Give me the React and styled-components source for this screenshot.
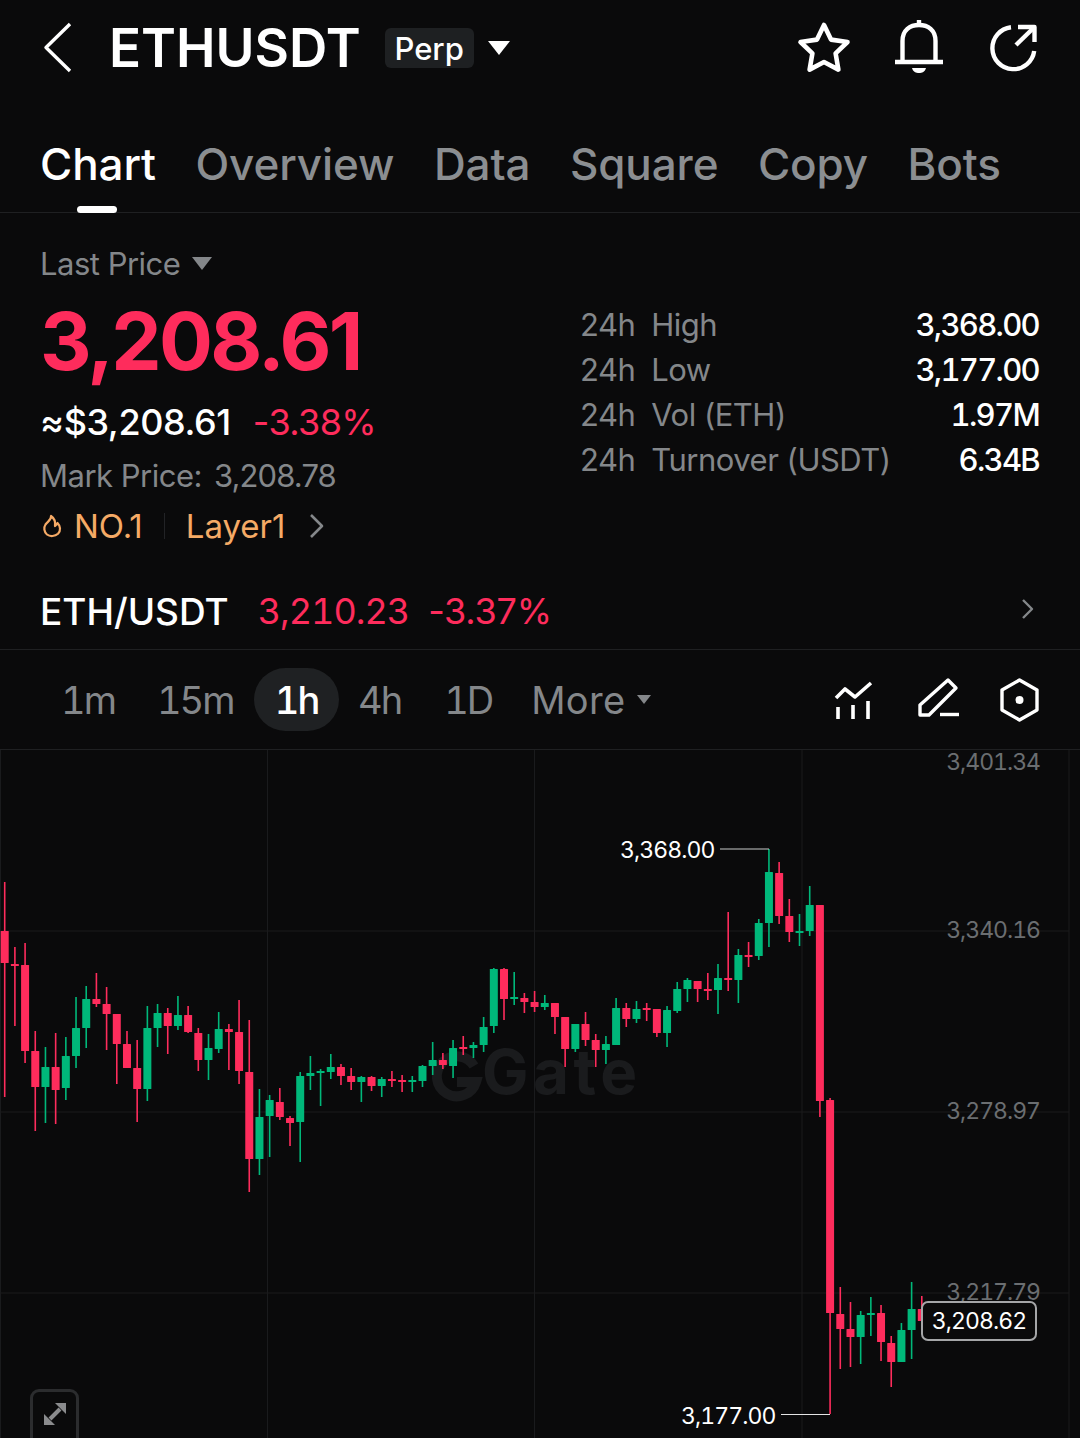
import React from 'react';
import styled, { createGlobalStyle } from 'styled-components';

const RED = '#fe2c5c';
const GREEN = '#00b87a';

const GlobalStyle = createGlobalStyle`
    html, body {
        margin: 0;
        padding: 0;
        background: #0a0a0b;
    }
    * {
        box-sizing: border-box;
    }
`;

const Page = styled.div`
    width: 1080px;
    height: 1438px;
    overflow: hidden;
    background: #0a0a0b;
    color: #fff;
    font-family: Inter, 'Noto Sans', sans-serif;
`;

const Header = styled.div`
    display: flex;
    align-items: center;
    height: 96px;
    padding: 0 42px 0 44px;
`;

const Icon = styled.svg`
    display: block;
    flex: none;
    overflow: visible;
    fill: none;
    stroke: ${(p) => p.$color || '#fff'};
    stroke-width: ${(p) => p.$stroke || 4}px;
    stroke-linejoin: round;
`;

const Title = styled.div`
    margin-left: 37px;
    font-size: 53px;
    font-weight: 600;
`;

const Badge = styled.div`
    margin-left: 24px;
    width: 89px;
    height: 40px;
    display: flex;
    align-items: center;
    justify-content: center;
    background: #1e2022;
    border-radius: 6px;
    font-size: 31px;
    font-weight: 500;
`;

const Caret = styled.div`
    flex: none;
    width: 0;
    height: 0;
    margin-left: ${(p) => p.$left || 0}px;
    border-left: ${(p) => p.$size}px solid transparent;
    border-right: ${(p) => p.$size}px solid transparent;
    border-top: ${(p) => p.$size * 1.25}px solid ${(p) => p.$color};
`;

const HeaderActions = styled.div`
    margin-left: auto;
    display: flex;
    align-items: center;
    gap: 47px;
`;

const Tabs = styled.div`
    display: flex;
    align-items: center;
    gap: 39.5px;
    height: 117px;
    padding: 20px 40px 0 40px;
    border-bottom: 1px solid #1f2022;
`;

const Tab = styled.div`
    position: relative;
    font-size: 44px;
    font-weight: 500;
    color: ${(p) => (p.$active ? '#fff' : '#8b8e91')};
    letter-spacing: -0.1px;

    ${(p) =>
        p.$active &&
        `&::after {
            content: '';
            position: absolute;
            left: 37px;
            bottom: -22px;
            width: 40px;
            height: 7px;
            border-radius: 4px;
            background: #fff;
        }`}
`;

const Summary = styled.div`
    display: flex;
    justify-content: space-between;
    height: 360px;
    padding: 32px 40px 0 40px;
`;

const LeftColumn = styled.div`
    display: flex;
    flex-direction: column;
`;

const PriceLabel = styled.div`
    display: flex;
    align-items: center;
    height: 36px;
    font-size: 31px;
    color: #84878a;
    letter-spacing: -0.5px;
`;

const LastPrice = styled.div`
    margin-top: 12px;
    height: 96px;
    line-height: 96px;
    font-size: 80px;
    font-weight: 700;
    color: ${RED};
    letter-spacing: -2.7px;
`;

const Approx = styled.div`
    display: flex;
    align-items: baseline;
    gap: 22px;
    margin-top: 11px;
    height: 44px;
    line-height: 44px;
    font-size: 36px;
    font-weight: 500;
    letter-spacing: -0.4px;
`;

const Change = styled.span`
    font-weight: 400;
    color: ${RED};
    letter-spacing: -0.6px;
`;

const MarkPrice = styled.div`
    display: flex;
    gap: 12px;
    margin-top: 13px;
    height: 38px;
    line-height: 38px;
    font-size: 31px;
    color: #84878a;
    letter-spacing: -0.5px;
`;

const MarkValue = styled.span`
    letter-spacing: -0.9px;
`;

const Ranking = styled.div`
    display: flex;
    align-items: center;
    margin-top: 12px;
    height: 38px;
    font-size: 33px;
    font-weight: 400;
    color: #f5aa66;
`;

const RankName = styled.span`
    margin-left: 10px;
`;

const RankDivider = styled.div`
    width: 1px;
    height: 26px;
    margin: 0 21px;
    background: #222326;
`;

const RankArrow = styled.div`
    margin-left: 24px;
`;

const RightColumn = styled.div`
    width: 460px;
    display: flex;
    flex-direction: column;
    padding-top: 57px;
`;

const StatRow = styled.div`
    display: flex;
    justify-content: space-between;
    align-items: center;
    height: 45px;
    padding-right: 1px;
    font-size: 31px;
`;

const StatLabel = styled.div`
    display: flex;
    gap: 16px;
    color: #84878a;
    letter-spacing: -0.5px;
`;

const StatValue = styled.div`
    font-weight: 500;
    font-variant-numeric: tabular-nums;
    letter-spacing: -1.7px;
`;

const SpotRow = styled.div`
    display: flex;
    align-items: center;
    height: 77px;
    padding: 0 47px 0 40px;
    border-bottom: 1px solid #1f2022;
`;

const SpotName = styled.div`
    font-size: 37px;
    font-weight: 500;
`;

const SpotValue = styled.div`
    margin-left: ${(p) => p.$left}px;
    font-size: 36px;
    color: ${RED};
    ${(p) =>
        p.$tabular
            ? 'font-variant-numeric: tabular-nums; letter-spacing: -1px;'
            : 'letter-spacing: -0.2px;'}
`;

const SpotArrow = styled.div`
    margin-left: auto;
    padding-bottom: 4px;
`;

const Toolbar = styled.div`
    display: flex;
    align-items: center;
    height: 100px;
    padding: 0 40px 0 61px;
    border-bottom: 1px solid #1f2022;
`;

const Interval = styled.div`
    margin-left: ${(p) => p.$left || 0}px;
    display: flex;
    align-items: center;
    justify-content: center;
    height: 63px;
    font-size: 38px;
    font-variant-numeric: tabular-nums;
    letter-spacing: ${(p) => (p.$word ? 0.3 : -2)}px;
    font-weight: ${(p) => (p.$active ? 500 : 400)};
    color: ${(p) => (p.$active ? '#fff' : '#84878a')};
    ${(p) => p.$active && 'width: 85px; border-radius: 32px; background: #1f2123;'}
`;

const ToolActions = styled.div`
    margin-left: auto;
    display: flex;
    align-items: center;
    gap: 40px;
`;

const Chart = styled.div`
    position: relative;
    height: 688px;
`;

const ChartCanvas = styled.svg`
    position: relative;
    display: block;
`;

const Watermark = styled.div`
    position: absolute;
    left: 482px;
    top: 287px;
    font-size: 62px;
    line-height: 70px;
    font-weight: 700;
    letter-spacing: 4.5px;
    color: #1a1b1d;
`;

const AxisLabel = styled.div`
    position: absolute;
    right: 40px;
    top: ${(p) => p.$top}px;
    font-size: 23px;
    line-height: 30px;
    font-variant-numeric: tabular-nums;
    letter-spacing: -1px;
    color: #6b6e71;
`;

const ExtremeLabel = styled.div`
    position: absolute;
    left: ${(p) => p.$left}px;
    top: ${(p) => p.$top}px;
    font-size: 23px;
    line-height: 30px;
    font-variant-numeric: tabular-nums;
    letter-spacing: -0.9px;
    color: #fff;
`;

const CurrentPrice = styled.div`
    position: absolute;
    left: 921px;
    top: 551px;
    width: 116px;
    height: 40px;
    display: flex;
    align-items: center;
    justify-content: center;
    background: #0a0a0b;
    border: 2px solid #a5a6a8;
    border-radius: 7px;
    font-size: 23px;
    font-variant-numeric: tabular-nums;
    letter-spacing: -0.9px;
    color: #fff;
`;

const ExpandButton = styled.div`
    position: absolute;
    left: 30px;
    top: 639px;
    width: 49px;
    height: 60px;
    padding: 10px 0 0 10px;
    border: 3px solid #2b2c2e;
    border-radius: 9px;
`;

const tabs = ['Chart', 'Overview', 'Data', 'Square', 'Copy', 'Bots'];

const stats = [
    ['24h', 'High', '3,368.00'],
    ['24h', 'Low', '3,177.00'],
    ['24h', 'Vol (ETH)', '1.97M'],
    ['24h', 'Turnover (USDT)', '6.34B']
];

// hi, lo, body top, body bottom, colour
const candles = [
    [882, 1097, 931, 963, 'r'], [947, 1026, 964, 966, 'r'], [943, 1063, 965, 1051, 'r'], [1031, 1131, 1051, 1087, 'r'],
    [1047, 1123, 1067, 1087, 'g'], [1033, 1124, 1067, 1090, 'r'], [1037, 1100, 1056, 1088, 'g'], [997, 1068, 1028, 1056, 'g'],
    [986, 1048, 999, 1028, 'g'], [973, 1007, 999, 1004, 'r'], [987, 1050, 1004, 1014, 'r'], [1014, 1084, 1014, 1044, 'r'],
    [1031, 1068, 1044, 1068, 'r'], [1040, 1122, 1068, 1089, 'r'], [1006, 1101, 1028, 1089, 'g'], [1004, 1047, 1013, 1028, 'g'],
    [1008, 1054, 1013, 1026, 'r'], [996, 1030, 1015, 1026, 'g'], [1006, 1033, 1015, 1032, 'r'], [1028, 1071, 1033, 1060, 'r'],
    [1034, 1080, 1048, 1060, 'g'], [1012, 1053, 1029, 1049, 'g'], [1024, 1070, 1029, 1032, 'r'], [1000, 1084, 1032, 1071, 'r'],
    [1020, 1192, 1072, 1159, 'r'], [1089, 1175, 1117, 1159, 'g'], [1095, 1157, 1100, 1116, 'g'], [1088, 1120, 1102, 1117, 'r'],
    [1116, 1146, 1118, 1123, 'r'], [1072, 1162, 1076, 1122, 'g'], [1056, 1090, 1073, 1076, 'g'], [1069, 1106, 1071, 1073, 'g'],
    [1054, 1079, 1067, 1072, 'g'], [1064, 1085, 1067, 1076, 'r'], [1068, 1090, 1076, 1082, 'r'], [1076, 1102, 1077, 1082, 'g'],
    [1076, 1091, 1077, 1086, 'r'], [1077, 1097, 1079, 1086, 'g'], [1071, 1087, 1079, 1081, 'r'], [1075, 1092, 1080, 1082, 'r'],
    [1076, 1092, 1080, 1082, 'g'], [1065, 1087, 1066, 1081, 'g'], [1042, 1075, 1060, 1066, 'g'], [1053, 1069, 1060, 1065, 'r'],
    [1040, 1078, 1048, 1066, 'g'], [1036, 1055, 1047, 1049, 'r'], [1042, 1058, 1045, 1048, 'g'], [1017, 1052, 1027, 1045, 'g'],
    [968, 1033, 969, 1026, 'g'], [968, 1020, 969, 999, 'r'], [972, 1005, 997, 999, 'g'], [993, 1013, 998, 1002, 'r'],
    [991, 1012, 1002, 1007, 'r'], [995, 1010, 1003, 1007, 'g'], [1003, 1034, 1003, 1017, 'r'], [1017, 1067, 1017, 1049, 'r'],
    [1024, 1052, 1024, 1049, 'g'], [1012, 1046, 1024, 1040, 'r'], [1034, 1067, 1040, 1050, 'r'], [1036, 1064, 1044, 1050, 'g'],
    [998, 1045, 1008, 1045, 'g'], [1003, 1027, 1008, 1019, 'r'], [1001, 1023, 1009, 1019, 'g'], [1003, 1021, 1008, 1010, 'r'],
    [1009, 1037, 1009, 1033, 'r'], [1006, 1047, 1010, 1033, 'g'], [982, 1013, 989, 1011, 'g'], [978, 1002, 980, 989, 'g'],
    [981, 1002, 981, 989, 'r'], [973, 1000, 989, 991, 'r'], [964, 1014, 978, 990, 'g'], [912, 991, 978, 980, 'r'],
    [949, 1003, 955, 980, 'g'], [942, 967, 955, 957, 'r'], [919, 960, 923, 956, 'g'], [849, 947, 872, 923, 'g'],
    [862, 924, 873, 916, 'r'], [899, 942, 916, 932, 'r'], [914, 946, 931, 933, 'g'], [886, 936, 905, 931, 'g'],
    [905, 1117, 905, 1101, 'r'], [1098, 1414, 1100, 1313, 'r'], [1287, 1369, 1314, 1329, 'r'], [1302, 1367, 1329, 1337, 'r'],
    [1311, 1364, 1315, 1337, 'g'], [1297, 1336, 1313, 1315, 'g'], [1305, 1361, 1313, 1342, 'r'], [1336, 1387, 1343, 1362, 'r'],
    [1323, 1362, 1330, 1362, 'g'], [1282, 1359, 1309, 1330, 'g'], [1296, 1334, 1309, 1321, 'r']
];

const gridColumns = [0.5, 267.5, 534.5, 802, 1069];
const gridRows = [931, 1112, 1293];

const Candle = ({ index, data }) => {
    const [hi, lo, top, bottom, side] = data;
    const cx = 4.7 + index * 10.19;
    const color = side === 'g' ? GREEN : RED;

    return (
        <g fill={color}>
            <rect x={cx - 0.8} y={hi} width={1.6} height={lo - hi} />
            <rect x={cx - 4} y={top} width={8} height={bottom - top} rx={0.5} />
        </g>
    );
};

const App = () => (
    <Page>
        <GlobalStyle />
        <Header>
            <Icon width="28" height="52" viewBox="44 22 28 52" $stroke={3.4}>
                <polyline points="70,24 46,47.5 70,71" />
            </Icon>
            <Title>ETHUSDT</Title>
            <Badge>Perp</Badge>
            <Caret $size={11.5} $left={14} $color="#fff" />
            <HeaderActions>
                <Icon width="52" height="54" viewBox="0 0 52 54" $stroke={4.6}>
                    <path d="M28 4 L35 18.6 L51.5 21 L39.6 32.4 L42.4 48.6 L28 41 L13.6 48.6 L16.4 32.4 L4.5 21 L21 18.6 Z" />
                </Icon>
                <Icon width="48" height="54" viewBox="0 0 48 54" $stroke={4.4}>
                    <path d="M7.5 41 V20 C7.5 9 15 4 24 4 C33 4 40.5 9 40.5 20 V41" />
                    <path d="M0 41 H48" />
                    <path d="M24 -1 V4" />
                    <path d="M17 47 H31 C30 51 27 52 24 52 C21 52 18 51 17 47 Z" fill="#fff" stroke="none" />
                </Icon>
                <Icon width="48" height="54" viewBox="0 0 48 54" $stroke={4.4}>
                    <path d="M21 6.3 A21 21 0 1 0 44.2 30" />
                    <path d="M26 24 L43.5 7" />
                    <path d="M28 6 H44.5 V21" />
                </Icon>
            </HeaderActions>
        </Header>

        <Tabs>
            {tabs.map((tab, i) => (
                <Tab key={tab} $active={i === 0}>
                    {tab}
                </Tab>
            ))}
        </Tabs>

        <Summary>
            <LeftColumn>
                <PriceLabel>
                    Last Price
                    <Caret $size={10.5} $left={12} $color="#84878a" />
                </PriceLabel>
                <LastPrice>3,208.61</LastPrice>
                <Approx>
                    ≈$3,208.61
                    <Change>-3.38%</Change>
                </Approx>
                <MarkPrice>
                    <span>Mark Price:</span>
                    <MarkValue>3,208.78</MarkValue>
                </MarkPrice>
                <Ranking>
                    <Icon width="24" height="26" viewBox="0 0 24 26" $color="#f5aa66" $stroke={2.2}>
                        <path d="M11 3 C11.5 7 8 8 5.5 11.5 C3.5 14.5 4 19 7 21.5 C10 23.8 15 23.5 18 20.8 C21 17.8 20.5 13 17.5 10 C17 11.8 16 12.5 15 13 C15.5 9 14 5 11 3 Z" />
                    </Icon>
                    <RankName>NO.1</RankName>
                    <RankDivider />
                    Layer1
                    <RankArrow>
                        <Icon width="16" height="26" viewBox="0 0 16 26" $color="#84878a" $stroke={2.6}>
                            <polyline points="2,2 13,13 2,24" />
                        </Icon>
                    </RankArrow>
                </Ranking>
            </LeftColumn>
            <RightColumn>
                {stats.map(([period, label, value]) => (
                    <StatRow key={label}>
                        <StatLabel>
                            <span>{period}</span>
                            <span>{label}</span>
                        </StatLabel>
                        <StatValue>{value}</StatValue>
                    </StatRow>
                ))}
            </RightColumn>
        </Summary>

        <SpotRow>
            <SpotName>ETH/USDT</SpotName>
            <SpotValue $left={29} $tabular>3,210.23</SpotValue>
            <SpotValue $left={19}>-3.37%</SpotValue>
            <SpotArrow>
                <Icon width="12" height="22" viewBox="0 0 12 22" $color="#84878a" $stroke={2.4}>
                    <polyline points="2,2 11,11 2,20" />
                </Icon>
            </SpotArrow>
        </SpotRow>

        <Toolbar>
            <Interval>1m</Interval>
            <Interval $left={42}>15m</Interval>
            <Interval $left={20.5} $active>1h</Interval>
            <Interval $left={19}>4h</Interval>
            <Interval $left={43}>1D</Interval>
            <Interval $left={39} $word>More</Interval>
            <Caret $size={7.5} $left={12} $color="#84878a" />
            <ToolActions>
                <Icon width="45" height="44" viewBox="833 678 45 44" $stroke={3.6}>
                    <polyline points="836,698 845,689 855,697 871,683" />
                    <path d="M838 707 V719 M853 705 V719 M868 701 V719" />
                </Icon>
                <Icon width="42" height="44" viewBox="917 678 42 44" $stroke={3.4}>
                    <path d="M919 705 L947 680 L955 688 L928 715 H919 Z" />
                    <path d="M939 714.5 H958" />
                </Icon>
                <Icon width="40" height="44" viewBox="1000 678 40 44" $stroke={3.4}>
                    <polygon points="1019.5,680 1037,690 1037,710 1019.5,720 1002,710 1002,690" />
                    <circle cx="1019.5" cy="700" r="4" fill="#fff" stroke="none" />
                </Icon>
            </ToolActions>
        </Toolbar>

        <Chart>
            <Watermark>Gate</Watermark>
            <ChartCanvas width="1080" height="688" viewBox="0 750 1080 688">
                {gridColumns.map((x) => (
                    <line key={x} x1={x} x2={x} y1="750" y2="1438" stroke="#1a1b1d" strokeWidth="1" />
                ))}
                {gridRows.map((y) => (
                    <line key={y} x1="0" x2="1069" y1={y} y2={y} stroke="#1a1b1d" strokeWidth="1" />
                ))}
                <path
                    d="M474 1066 A20 20 0 1 0 476 1082 H457"
                    fill="none"
                    stroke="#1a1b1d"
                    strokeWidth="10"
                />
                {candles.map((candle, i) => (
                    <Candle key={i} index={i} data={candle} />
                ))}
                <line x1="720" x2="769" y1="849" y2="849" stroke="#c8c9ca" strokeWidth="1.2" />
                <line x1="781" x2="830" y1="1414.5" y2="1414.5" stroke="#e4e4e5" strokeWidth="1.2" />
            </ChartCanvas>
            <AxisLabel $top={-3}>3,401.34</AxisLabel>
            <AxisLabel $top={165}>3,340.16</AxisLabel>
            <AxisLabel $top={346}>3,278.97</AxisLabel>
            <AxisLabel $top={527}>3,217.79</AxisLabel>
            <ExtremeLabel $left={620} $top={85}>3,368.00</ExtremeLabel>
            <ExtremeLabel $left={681} $top={651}>3,177.00</ExtremeLabel>
            <CurrentPrice>3,208.62</CurrentPrice>
            <ExpandButton>
                <Icon width="24" height="24" viewBox="0 0 24 24" $color="#8a8b8d" $stroke={4}>
                    <path d="M7 17 L17 7" />
                    <polygon points="12,1 23,1 23,12" fill="#8a8b8d" stroke="none" />
                    <polygon points="1,12 1,23 12,23" fill="#8a8b8d" stroke="none" />
                </Icon>
            </ExpandButton>
        </Chart>
    </Page>
);

export default App;
